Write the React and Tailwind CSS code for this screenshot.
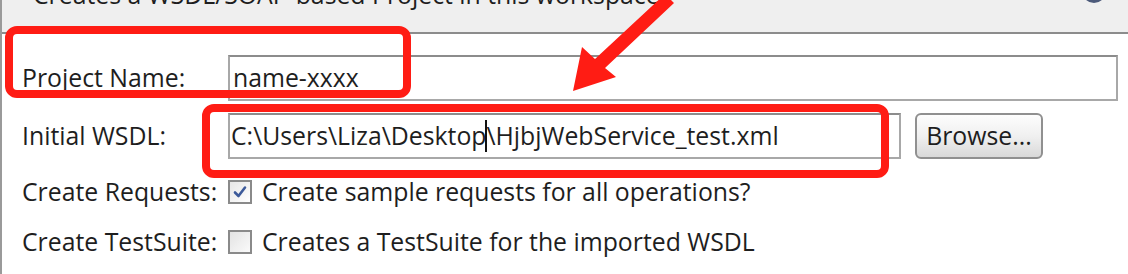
export default function App() {
  const font = { fontFamily: '"Open Sans", "Noto Sans", sans-serif' };
  return (
    <div className="relative w-[1128px] h-[274px] overflow-hidden bg-white text-[#1e1e1e] text-[24.8px] border-l-2 border-[#9a9a9a]" style={font}>
      {/* header */}
      <header className="h-[34px] bg-[#efefef] border-b-2 border-[#8c8c8c] flex justify-between overflow-hidden">
        <p className="pl-[31px] -mt-[22px] leading-[32px] whitespace-nowrap">Creates a WSDL/SOAP-based Project in this workspace</p>
        <span className="mr-[22px] -mt-[21px] w-[24px] h-[24px] rounded-full bg-[#4c5a7a]" />
      </header>

      <main className="pl-[20px] pt-[21px] pr-[10px]">
        <div className="grid grid-cols-[206px_1fr] items-center gap-y-[12px]">
          <label className="whitespace-nowrap">Project Name:</label>
          <div className="h-[46px] border-2 border-[#a8a8a8] border-t-[#8c8c8c] flex items-center pl-[3px]">
            name-xxxx
          </div>

          <label className="whitespace-nowrap">Initial WSDL:</label>
          <div className="flex items-center gap-[14px]">
            <div className="w-[673px] h-[46px] border-2 border-[#a8a8a8] border-t-[#8c8c8c] flex items-center pl-[1px] whitespace-nowrap">
              C:\Users\Liza\Desktop<span className="inline-block w-[2px] h-[32px] bg-[#111] -mx-[1px]" />\HjbjWebService_test.xml
            </div>
            <button className="w-[128px] h-[46px] rounded-[6px] border-2 border-[#909090] bg-gradient-to-b from-[#fdfdfd] via-[#f0f0f0] to-[#d9d9d9] flex items-center justify-center">
              Browse...
            </button>
          </div>
        </div>

        <div className="grid grid-cols-[206px_1fr] items-center mt-[8px]">
          <label className="h-[50px] flex items-center whitespace-nowrap">Create Requests:</label>
          <div className="flex items-center gap-[10px]">
            <span className="w-[24px] h-[24px] border-2 border-[#8a8a8a] bg-gradient-to-br from-[#e6e6e6] to-white flex items-center justify-center">
              <svg viewBox="0 0 16 16" className="w-[16px] h-[16px]">
                <path d="M3 8.5 L6.5 12 L13 3.5" fill="none" stroke="#3c5a9a" strokeWidth="2.6" strokeLinecap="round" strokeLinejoin="round" />
              </svg>
            </span>
            <span className="whitespace-nowrap">Create sample requests for all operations?</span>
          </div>

          <label className="h-[50px] flex items-center whitespace-nowrap">Create TestSuite:</label>
          <div className="flex items-center gap-[10px]">
            <span className="w-[24px] h-[24px] border-2 border-[#8a8a8a] bg-gradient-to-br from-[#e3e3e3] to-[#fafafa]" />
            <span className="whitespace-nowrap">Creates a TestSuite for the imported WSDL</span>
          </div>
        </div>
      </main>

      {/* annotations */}
      <div className="absolute left-[3px] top-[26px] w-[406px] h-[72px] border-[8px] border-[#ff1c14] rounded-[12px]" />
      <div className="absolute left-[200px] top-[104px] w-[687px] h-[74px] border-[8px] border-[#ff1c14] rounded-[12px]" />
      <svg className="absolute left-0 top-0" width="1128" height="274">
        <polygon points="571,91 580,47 593,59 663,-6 672,3 603,68 614,77" fill="#ff1c14" />
      </svg>
    </div>
  );
}
